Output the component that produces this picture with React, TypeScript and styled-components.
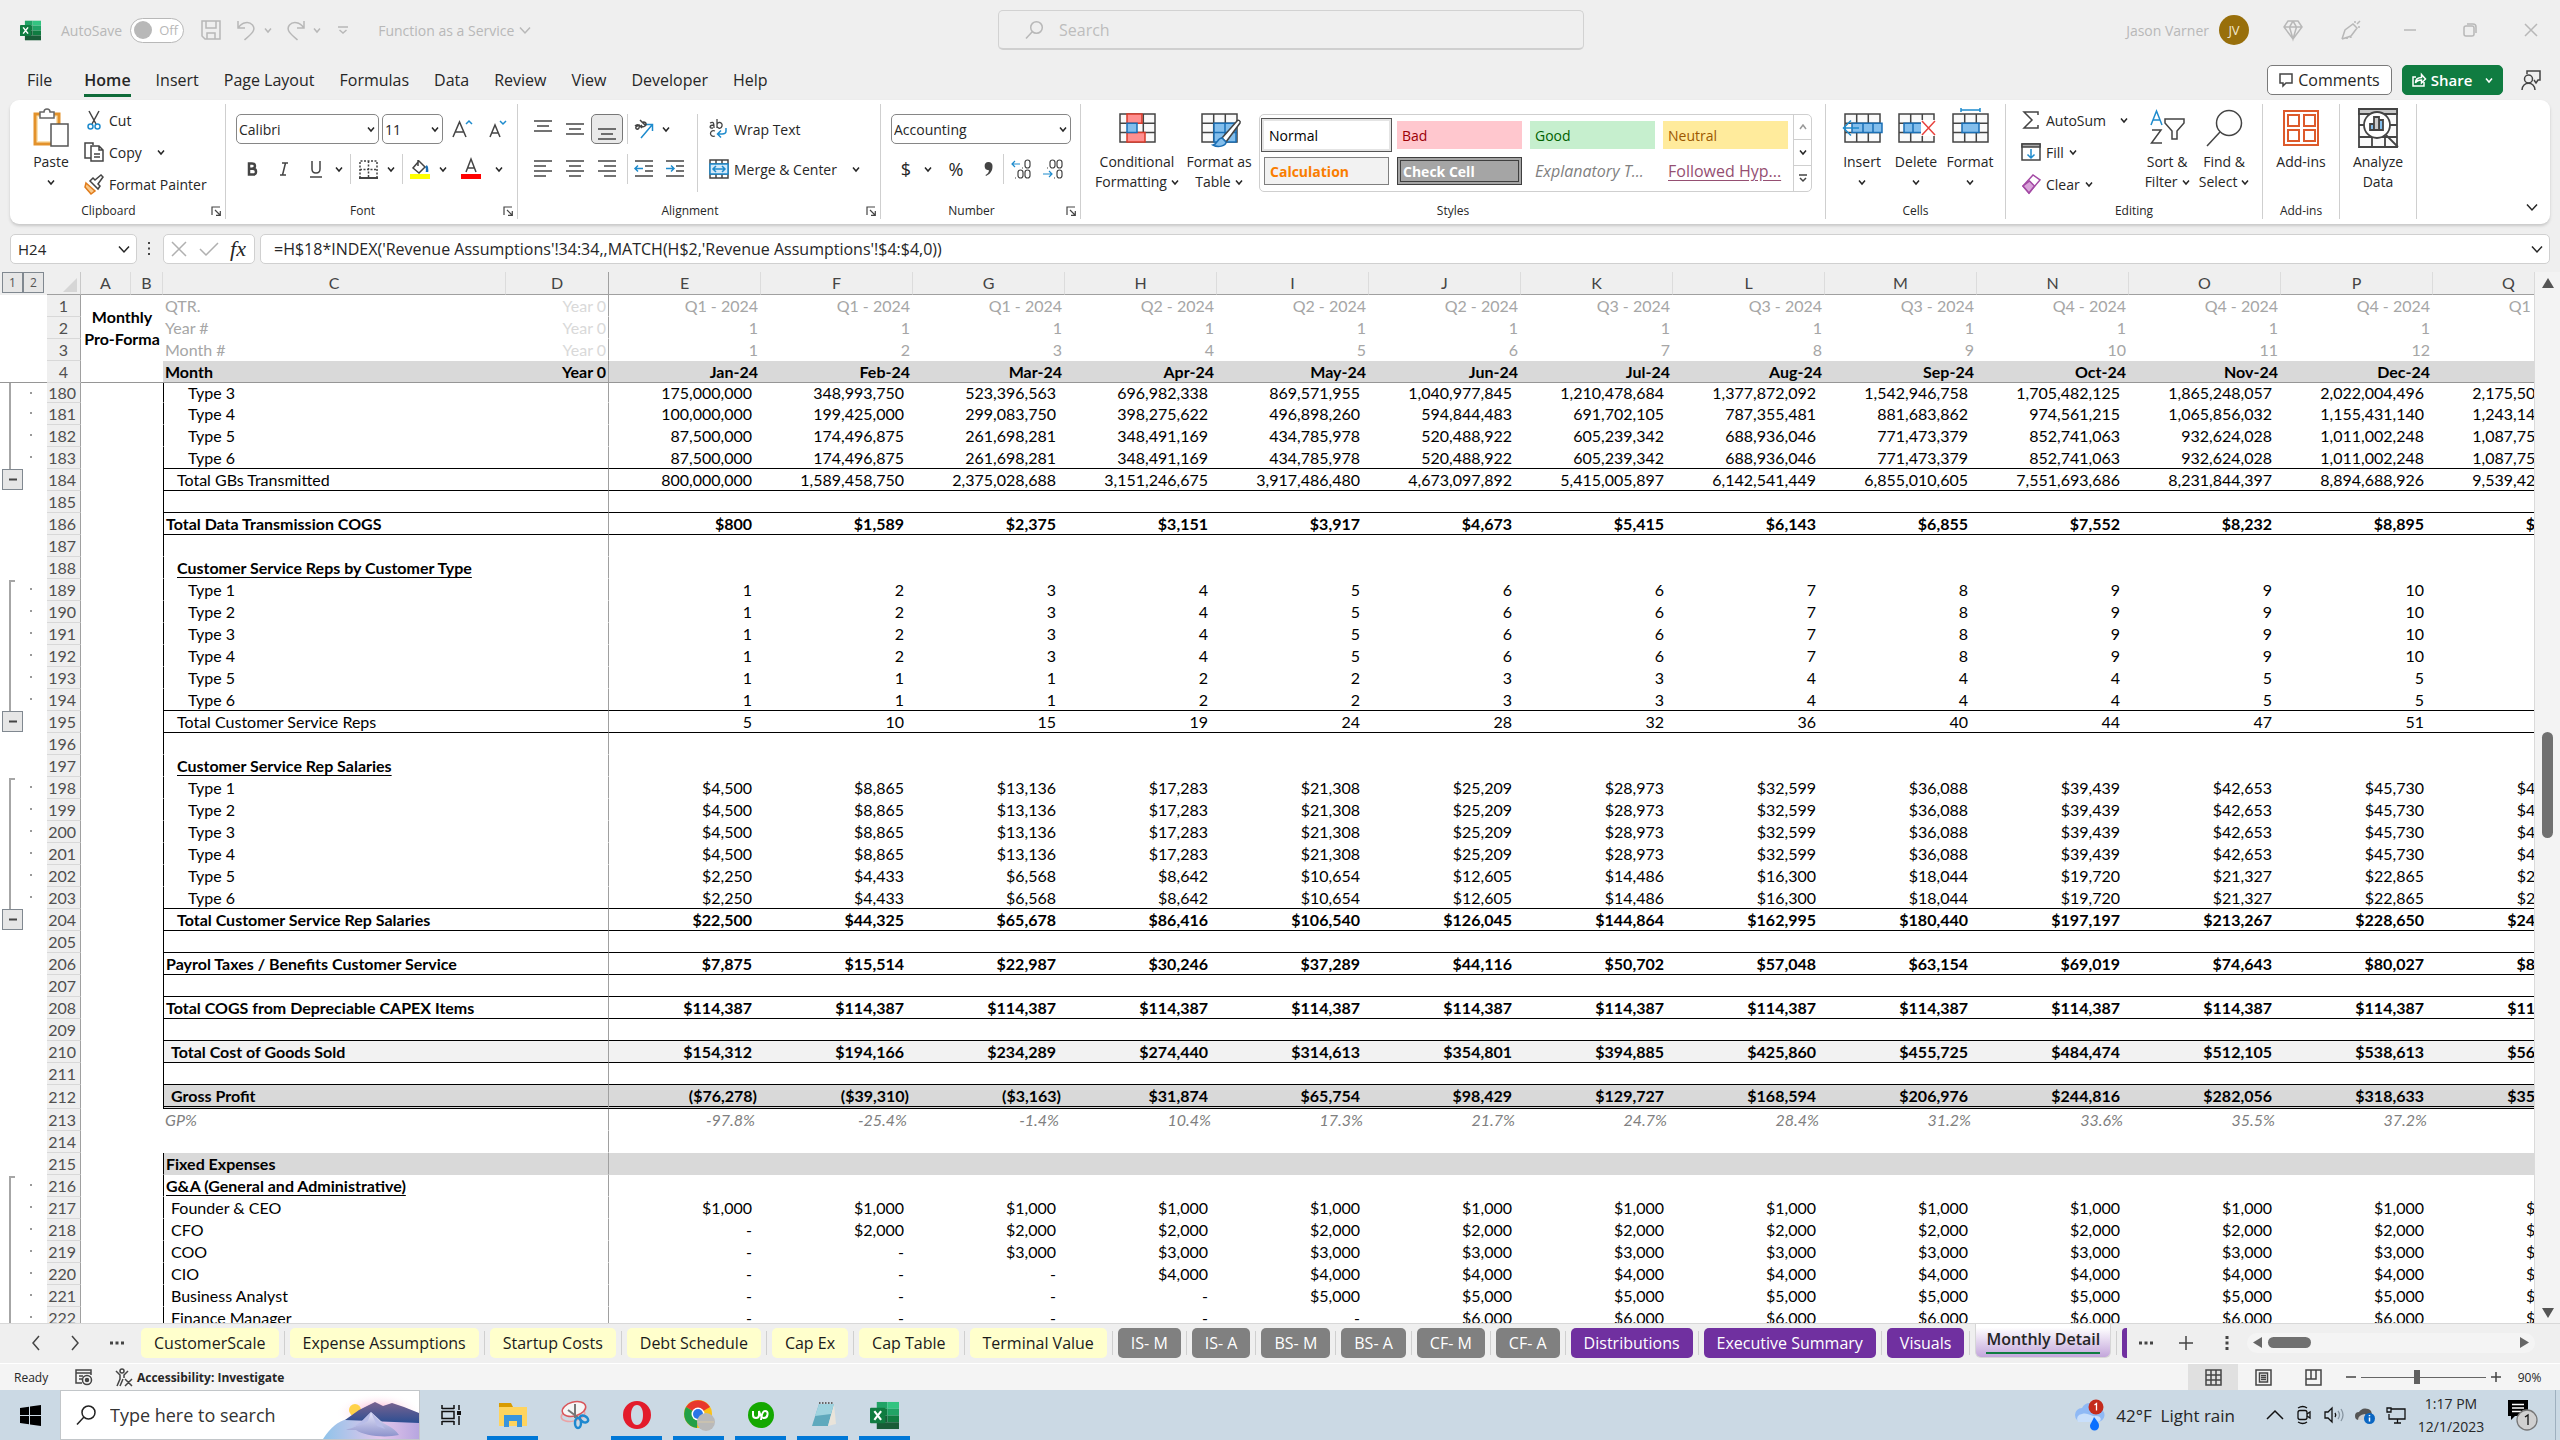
import React from 'react';
import styled, { createGlobalStyle, css } from 'styled-components';

const UI = '"Open Sans", "Noto Sans", sans-serif';
const SHEET = 'Lato, "Open Sans", sans-serif';
const INK = '#262626';
const LINE = '#444444';
const BLUE = '#1e8bcd';
const FAINT = '#b8b8b8';
const GREEN = '#107c41';

const Global = createGlobalStyle`
  * { box-sizing: border-box; }
  html, body { margin: 0; background: #efefef; }
  body { font-family: ${UI}; font-size: 14px; color: ${INK}; }
  button, input, select { font: inherit; color: inherit; margin: 0; }
  button { background: none; border: 0; padding: 0; }
`;

/* ---------- shared pieces ---------- */

const Svg = styled.svg`
  display: block;
  flex: none;
  overflow: visible;
`;

type IconProps = { w: number; h?: number; c?: string; s?: number; children: React.ReactNode };
const Icon = ({ w, h = w, c = LINE, s = 1.5, children }: IconProps) => (
  <Svg width={w} height={h} viewBox={`0 0 ${w} ${h}`} fill="none" stroke={c} strokeWidth={s} aria-hidden="true">
    {children}
  </Svg>
);
const Chevron = ({ w = 8, c = INK, s = 1.5 }: { w?: number; c?: string; s?: number }) => (
  <Icon w={w} h={w / 2 + 1} c={c} s={s}><path d={`M1 .5 L${w / 2} ${w / 2} L${w - 1} .5`} /></Icon>
);

const Window = styled.div`
  height: 100vh;
  display: flex;
  flex-direction: column;
  background: #efefef;
  overflow: hidden;
`;

/* ---------- title bar ---------- */

const TitleBar = styled.header`
  display: grid;
  grid-template-columns: 998px minmax(200px, 586px) 1fr;
  height: 60px;
  flex: none;
  color: ${FAINT};
`;
const TitleSide = styled.div<{ $end?: boolean }>`
  display: flex;
  align-items: center;
  height: 60px;
  padding: ${p => (p.$end ? '0 22px 0 0' : '0 0 0 20px')};
  justify-content: ${p => (p.$end ? 'flex-end' : 'flex-start')};
`;
const AutoSave = styled.label`
  display: flex;
  align-items: center;
  gap: 8px;
  margin: 0 16px 0 20px;
`;
const Toggle = styled.span`
  display: flex;
  align-items: center;
  gap: 7px;
  width: 54px;
  height: 25px;
  padding-left: 3px;
  border: 1px solid ${FAINT};
  border-radius: 13px;
  background: #fff;
  font-size: 13px;
  input {
    appearance: none;
    width: 18px;
    height: 18px;
    border-radius: 50%;
    background: ${FAINT};
  }
`;
const PlainButton = styled.button<{ $w: number; $ml?: number }>`
  display: flex;
  align-items: center;
  justify-content: center;
  gap: 5px;
  min-width: ${p => p.$w}px;
  height: 30px;
  flex: none;
  margin-left: ${p => p.$ml ?? 0}px;
`;
const SearchBox = styled.label`
  display: flex;
  align-items: center;
  gap: 16px;
  height: 40px;
  margin-top: 10px;
  padding-left: 26px;
  border: 1px solid #d2d2d2;
  border-bottom: 2px solid #cfcfcf;
  border-radius: 5px;
  input {
    flex: 1;
    border: 0;
    padding: 0;
    background: none;
    font-size: 16px;
    outline: 0;
  }
  input::placeholder { color: #bdbdbd; opacity: 1; }
`;
const Avatar = styled.span`
  display: grid;
  place-items: center;
  width: 30px;
  height: 30px;
  margin: 0 24px 0 10px;
  border-radius: 50%;
  background: #986f0b;
  color: #f3e9d0;
  font-size: 13px;
`;

/* ---------- ribbon tabs ---------- */

const TabRow = styled.nav`
  display: flex;
  align-items: center;
  height: 40px;
  flex: none;
  padding: 0 19px 0 27px;
  gap: 25px;
`;
const RibbonTab = styled.button<{ $on?: boolean }>`
  height: 34px;
  padding-top: 3px;
  font-size: 16px;
  font-weight: ${p => (p.$on ? 600 : 400)};
  border-bottom: 3px solid ${p => (p.$on ? '#0f6b39' : 'transparent')};
  &:first-child { margin-right: 7px; }
`;
const Grow = styled.div`flex: 1;`;
const Actions = styled.div`
  display: flex;
  align-items: center;
  gap: 10px;
`;
const CommentsButton = styled.button`
  display: flex;
  align-items: center;
  justify-content: center;
  gap: 5px;
  width: 125px;
  height: 30px;
  border: 1px solid #7a7a7a;
  border-radius: 5px;
  background: #fff;
  font-size: 16px;
`;
const ShareButton = styled(CommentsButton)`
  width: 101px;
  border-color: ${GREEN};
  background: ${GREEN};
  color: #fff;
  font-weight: 600;
  font-size: 15px;
  svg:last-child { margin-left: 8px; }
`;

/* ---------- ribbon ---------- */

const Ribbon = styled.section`
  display: flex;
  height: 124px;
  flex: none;
  margin: 0 10px 10px;
  padding: 4px 0 5px;
  background: #fff;
  border-radius: 9px;
  box-shadow: 0 2px 3px #c8c8c8;
`;
const GroupBox = styled.div<{ $w: number }>`
  display: flex;
  flex-direction: column;
  width: ${p => p.$w}px;
  flex: none;
  border-right: 1px solid #cfcfcf;
`;
const GroupBody = styled.div<{ $pl?: number }>`
  display: flex;
  flex: 1;
  padding-left: ${p => p.$pl ?? 0}px;
`;
const GroupFoot = styled.div`
  display: flex;
  align-items: center;
  height: 16px;
  font-size: 12px;
  line-height: 16px;
  span { flex: 1; text-align: center; }
  button { width: 18px; padding-left: 4px; }
`;
const Stack = styled.div<{ $pt?: number; $gap?: number; $ml?: number }>`
  display: flex;
  flex-direction: column;
  padding-top: ${p => p.$pt ?? 10}px;
  gap: ${p => p.$gap ?? 10}px;
  margin-left: ${p => p.$ml ?? 0}px;
`;
const Line = styled.div<{ $gap?: number }>`
  display: flex;
  align-items: center;
  height: 30px;
  gap: ${p => p.$gap ?? 0}px;
`;
const Tool = styled.button<{ $on?: boolean; $w?: number }>`
  display: flex;
  align-items: center;
  justify-content: center;
  width: ${p => p.$w ?? 32}px;
  height: 30px;
  flex: none;
  font-size: 18px;
  ${p => p.$on && css`border: 1px solid #777; border-radius: 5px; background: #e9e9e9;`}
`;
const Drop = styled(Tool)`width: 14px;`;
const Sep = styled.i<{ $h?: number }>`
  width: 1px;
  height: ${p => p.$h ?? 30}px;
  flex: none;
  margin: 0 1px 0 4px;
  background: #cfcfcf;
`;
const TextTool = styled.button<{ $h?: number }>`
  display: flex;
  align-items: center;
  gap: 5px;
  height: ${p => p.$h ?? 32}px;
  white-space: nowrap;
`;
const IconSlot = styled.span<{ $w: number }>`
  display: flex;
  justify-content: center;
  width: ${p => p.$w}px;
  flex: none;
`;
const BigTool = styled.button<{ $w: number }>`
  display: flex;
  flex-direction: column;
  align-items: center;
  width: ${p => p.$w}px;
  flex: none;
  height: 88px;
  line-height: 20px;
  white-space: nowrap;
`;
const BigArt = styled.span`
  display: flex;
  align-items: center;
  justify-content: center;
  height: 48px;
`;
const BigLine = styled.span`
  display: flex;
  align-items: center;
  gap: 4px;
  height: 20px;
`;
const SelectWrap = styled.span<{ $w: number }>`
  display: grid;
  align-items: center;
  width: ${p => p.$w}px;
  height: 30px;
  flex: none;
  select {
    grid-area: 1 / 1;
    width: 100%;
    height: 30px;
    padding: 0 2px;
    appearance: none;
    border: 1px solid #868686;
    border-radius: 5px;
    background: #fff;
  }
  svg { grid-area: 1 / 1; justify-self: end; margin-right: 4px; pointer-events: none; }
`;
const Gallery = styled.div`
  display: flex;
  width: 553px;
  height: 78px;
  margin: 10px 0 0 4px;
  border: 1px solid #cfcfcf;
  border-radius: 5px;
  overflow: hidden;
`;
const Swatches = styled.div`
  display: grid;
  grid-template-columns: repeat(4, 125px);
  grid-auto-rows: 28px;
  gap: 8px;
  padding: 6px 5px 0 4px;
`;
const Swatch = styled.button<{ $bg: string; $fg: string; $kind?: string }>`
  padding-left: 5px;
  text-align: left;
  background: ${p => p.$bg};
  color: ${p => p.$fg};
  white-space: nowrap;
  ${p => p.$kind === 'picked' && css`outline: 1px solid #555; outline-offset: 2px; box-shadow: 0 0 0 2px #e4e4e4;`}
  ${p => p.$kind === 'calc' && css`border: 1px solid #7f7f7f; font-weight: 700;`}
  ${p => p.$kind === 'check' && css`border: 4px double #3f3f3f; padding-left: 2px; font-weight: 700;`}
  ${p => p.$kind === 'note' && css`font-style: italic; font-size: 16px;`}
  ${p => p.$kind === 'link' && css`text-decoration: underline; text-underline-offset: 3px; font-size: 16px;`}
`;
const GalleryNav = styled.div`
  display: grid;
  grid-template-rows: 1fr 1fr 1fr;
  flex: 1;
  border-left: 1px solid #cfcfcf;
  button { display: grid; place-items: center; border-bottom: 1px solid #cfcfcf; }
  button:last-child { border: 0; }
`;
const Collapse = styled.button`
  align-self: flex-end;
  margin: 0 12px 8px auto;
`;

/* ---------- formula bar ---------- */

const FormulaBar = styled.section`
  display: flex;
  align-items: center;
  height: 38px;
  flex: none;
  padding: 0 10px 8px;
  gap: 5px;
`;
const NameBox = styled.label`
  display: flex;
  align-items: center;
  width: 127px;
  height: 30px;
  padding: 0 6px 0 7px;
  border: 1px solid #d0d0d0;
  border-radius: 5px;
  background: #fff;
  input { width: 100px; flex: 1; border: 0; padding: 0; background: none; font-size: 15px; outline: 0; }
`;
const FxBox = styled.div`
  display: flex;
  align-items: center;
  justify-content: space-between;
  width: 92px;
  height: 30px;
  margin-left: 2px;
  padding: 0 8px 0 7px;
  border: 1px solid #d0d0d0;
  border-radius: 5px;
  background: #fff;
`;
const Fx = styled.button`
  font: italic 22px/24px "Liberation Serif", serif;
`;
const FormulaField = styled(NameBox)`
  flex: 1;
  padding-left: 13px;
  input { font-size: 16px; }
`;

/* ---------- worksheet ---------- */

const SheetArea = styled.main`
  display: flex;
  flex: 1;
  min-height: 0;
  background: #fff;
`;
const GridClip = styled.div`
  flex: 1;
  min-width: 0;
  overflow: hidden;
`;
const Grid = styled.table`
  width: 2585px;
  table-layout: fixed;
  border-collapse: separate;
  border-spacing: 0;
  background: #fff;
  font-family: ${SHEET};
  font-size: 16px;
  line-height: 21px;
  color: #000;
  white-space: nowrap;
  th, td { padding: 0; overflow: hidden; }
`;
const Col = styled.col<{ $w: number }>`width: ${p => p.$w}px;`;
const HeadRow = styled.tr`
  height: 23px;
  background: #efefef;
`;
const ColHead = styled.th<{ $freeze?: boolean }>`
  height: 23px;
  border-bottom: 1px solid #a0a0a0;
  border-right: 1px solid ${p => (p.$freeze ? '#a0a0a0' : '#dcdcdc')};
  color: #444;
  font-weight: 400;
  line-height: 22px;
`;
const LevelCell = styled.th`
  && { padding-left: 2px; text-align: left; vertical-align: top; line-height: 0; }
`;
const Level = styled.button`
  width: 21px;
  height: 21px;
  border: 1px solid #808890;
  background: #e6e6e6;
  font: 12px/18px ${UI};
  color: #555;
`;
const Corner = styled(ColHead)`
  border-right: 1px solid #c8c8c8;
  svg { margin: 4px 3px 0 auto; }
`;
const Row = styled.tr<{ $h?: number }>`
  height: ${p => p.$h ?? 22}px;
  ${p => p.$h === 20 && css`line-height: 19px;`}
`;
const RowHead = styled.th`
  && { padding-right: 4px; }
  border-right: 1px solid #a0a0a0;
  border-bottom: 1px solid #d8d8d8;
  background: #efefef;
  color: #505050;
  font-weight: 400;
  text-align: right;
`;
const FrozenHead = styled(RowHead)`
  &&& { padding-right: 0; }
  text-align: center;
`;
const GutterCell = styled.td`
  position: relative;
  vertical-align: top;
`;
const Bracket = styled.i<{ $start?: boolean }>`
  position: absolute;
  inset: ${p => (p.$start ? '1px' : '0')} auto 0 9px;
  width: 6px;
  border-left: 2px solid #a6a6a6;
  border-top: ${p => (p.$start ? '2px solid #a6a6a6' : '0')};
`;
const Dot = styled.i`
  position: absolute;
  left: 30px;
  top: 9px;
  width: 2px;
  height: 2px;
  background: #999;
`;
const Minus = styled.button`
  display: grid;
  place-items: center;
  width: 21px;
  height: 21px;
  margin-left: 2px;
  border: 1px solid #808890;
  background: #e6e6e6;
`;
type CellStyle = {
  $bg?: string; $fg?: string; $bold?: boolean; $italic?: boolean; $under?: boolean;
  $line?: string; $right?: number; $left?: number; $edge?: string; $divide?: boolean;
};
const Cell = styled.td<CellStyle>`
  background: ${p => p.$bg ?? 'transparent'};
  color: ${p => p.$fg ?? '#000'};
  font-weight: ${p => (p.$bold ? 700 : 400)};
  font-style: ${p => (p.$italic ? 'italic' : 'normal')};
  text-decoration: ${p => (p.$under ? 'underline' : 'none')};
  text-underline-offset: 3px;
  text-decoration-skip-ink: none;
  border-bottom: ${p => p.$line ?? '1px solid transparent'};
  text-align: ${p => (p.$left === undefined ? 'right' : 'left')};
  && { padding-left: ${p => p.$left ?? 0}px; padding-right: ${p => p.$right ?? 0}px; }
  ${p => p.$edge && css`border-left: 1px solid ${p.$edge};`}
  ${p => p.$divide && css`border-right: 1px solid #a0a0a0;`}
`;
const Title = styled.td`
  text-align: center;
  font-weight: 700;
  line-height: 22px;
`;
const VScroll = styled.aside`
  display: flex;
  flex-direction: column;
  align-items: center;
  width: 26px;
  padding: 6px 0 5px;
  border-left: 1px solid #dadada;
  background: #f3f3f3;
`;
const VThumb = styled.div`
  width: 11px;
  height: 106px;
  margin-top: 444px;
  border-radius: 6px;
  background: #707070;
`;

/* ---------- sheet tabs & status ---------- */

const SheetBar = styled.nav`
  display: flex;
  align-items: center;
  height: 41px;
  flex: none;
  padding: 0 25px 2px 32px;
  border-top: 1px solid #d8d8d8;
  border-bottom: 1px solid #fff;
  white-space: nowrap;
`;
const NavSet = styled.div`
  display: flex;
  align-items: center;
  gap: 31px;
  width: 109px;
  flex: none;
`;
const TabSlot = styled.div`
  display: flex;
  align-items: center;
  flex: none;
  &::after { content: ''; width: 1px; height: 24px; margin: 0 5px; background: #cfcfcf; }
`;
const SheetTab = styled.button<{ $bg: string; $fg: string }>`
  height: 30px;
  padding: 0 13px;
  border-radius: 5px;
  background: ${p => p.$bg};
  color: ${p => p.$fg};
  font-size: 16px;
`;
const ActiveTab = styled.button`
  height: 34px;
  margin-top: -4px;
  padding: 0 10px;
  border: 1px solid #d6d6d6;
  border-top: 0;
  border-radius: 0 0 6px 6px;
  background: linear-gradient(#fff 10%, #c3a6db);
  font-size: 16px;
  font-weight: 600;
  span { display: block; height: 27px; line-height: 25px; border-bottom: 2px solid ${GREEN}; }
`;
const NextTab = styled.span`
  width: 5px;
  height: 30px;
  border-radius: 4px 0 0 4px;
  background: #7030a0;
`;
const HScroll = styled.div`
  display: flex;
  align-items: center;
  width: 288px;
  height: 20px;
  margin-left: 18px;
  padding: 0 6px;
  border-radius: 10px;
  background: #f4f4f4;
`;
const HThumb = styled.div`
  width: 43px;
  height: 11px;
  margin: 0 auto 0 6px;
  border-radius: 6px;
  background: #707070;
`;
const StatusBar = styled.footer`
  display: flex;
  align-items: center;
  height: 26px;
  flex: none;
  padding: 0 18px 0 14px;
  background: #f4f4f4;
  font-size: 12px;
`;
const ViewButton = styled.button<{ $on?: boolean }>`
  display: grid;
  place-items: center;
  width: 50px;
  height: 26px;
  background: ${p => (p.$on ? '#e0e0e0' : 'transparent')};
`;
const Zoom = styled.input`
  && { margin: 0 5px; }
  width: 125px;
  height: 16px;
  appearance: none;
  background: linear-gradient(#666, #666) center / 100% 1px no-repeat;
  &::-webkit-slider-thumb {
    appearance: none;
    width: 6px;
    height: 14px;
    background: #606060;
  }
`;

/* ---------- taskbar ---------- */

const Taskbar = styled.footer`
  display: flex;
  height: 50px;
  flex: none;
  background: #cbd9e4;
`;
const StartButton = styled.button`
  width: 60px;
  padding-left: 20px;
`;
const TaskSearch = styled.label`
  display: flex;
  align-items: center;
  width: 360px;
  margin-right: -6px;
  padding-left: 15px;
  border: 1px solid #c2c6c9;
  background: #fff;
  overflow: hidden;
  input { width: 200px; flex: 1; border: 0; padding: 0 0 0 14px; background: none; font-size: 18px; outline: 0; }
  input::placeholder { color: #333; opacity: 1; }
`;
const TaskApp = styled.button<{ $open?: boolean }>`
  display: grid;
  place-items: center;
  width: 51px;
  height: 50px;
  margin-left: 11px;
  padding-top: 4px;
  border-bottom: 4px solid ${p => (p.$open ? '#0078d7' : 'transparent')};
`;
const Tray = styled.div`
  display: flex;
  align-items: center;
  margin-left: auto;
  padding-right: 17px;
  border-right: 1px solid #9fb0bf;
  margin-right: 4px;
`;
const Weather = styled.button`
  display: flex;
  align-items: center;
  gap: 12px;
  font-size: 17px;
  white-space: pre;
`;
const TrayIcons = styled.div`
  display: flex;
  align-items: center;
  gap: 11px;
  margin: 0 10px 0 31px;
`;
const Clock = styled.time`
  width: 70px;
  margin-right: 22px;
  font-size: 14px;
  line-height: 23px;
  text-align: center;
  white-space: nowrap;
`;

/* ---------- drawings ---------- */

const ExcelLogo = ({ w = 21 }: { w?: number }) => (
  <Svg width={w} height={w} viewBox="0 0 30 30" aria-hidden="true">
    <path d="M7 1h11v7H7z" fill="#21a366" /><path d="M18 1h12v7H18z" fill="#33c481" />
    <path d="M7 8h11v7H7z" fill="#107c41" /><path d="M18 8h12v7H18z" fill="#21a366" />
    <path d="M7 15h11v7H7z" fill="#185c37" /><path d="M18 15h12v7H18z" fill="#107c41" />
    <path d="M7 22h23v7H7z" fill="#185c37" />
    <rect x="0" y="7" width="16" height="16" rx="1" fill="#107c41" />
    <path d="M4.500 10.500l7 9M11.500 10.500l-7 9" stroke="#fff" strokeWidth="2.200" />
  </Svg>
);
const Launcher = () => <Icon w={10} s={1.2}><path d="M1 9V1h8M4 4l5 5M9.300 5v4.300H5" /></Icon>;
const ALIGN: Record<string, number[][]> = {
  top: [[0, 18, 1], [3, 15, 6], [0, 18, 11]],
  middle: [[0, 18, 4], [3, 15, 9], [0, 18, 14]],
  bottom: [[0, 18, 9], [3, 15, 14], [0, 18, 19]],
  left: [[0, 18, 1], [0, 12, 6], [0, 18, 11], [0, 12, 16]],
  center: [[0, 18, 1], [3, 15, 6], [0, 18, 11], [3, 15, 16]],
  right: [[0, 18, 1], [6, 18, 6], [0, 18, 11], [6, 18, 16]],
};
const AlignIcon = ({ kind }: { kind: string }) => (
  <Icon w={18}>{ALIGN[kind].map(([a, b, y]) => <path key={y} d={`M${a} ${y}H${b}`} />)}</Icon>
);
const IndentIcon = ({ out }: { out?: boolean }) => (
  <Icon w={18}>
    <path d="M0 1h18M10 6h8M10 11h8M0 16h18" />
    <path d={out ? 'M8 8.500H0M3 5.500l-3 3 3 3' : 'M0 8.500h8M5 5.500l3 3-3 3'} stroke={BLUE} />
  </Icon>
);
const TableArt = ({ children }: { children?: React.ReactNode }) => (
  <Icon w={38} h={40}>
    <rect x="2" y="6" width="35" height="28" fill="#fafafa" />
    <path d="M2 15.300h35M2 24.600h35M13.700 6v28M25.300 6v28" />
    {children}
  </Icon>
);
const ART = {
  cond: (
    <TableArt>
      <path d="M9 6h15v9.300H9zM9 24.600h18V34H9z" fill="#ff8f8f" stroke="#d83b2b" />
      <path d="M9 15.300h10v9.300H9z" fill="#83beec" stroke="#1a6fb5" />
    </TableArt>
  ),
  table: (
    <TableArt>
      <path d="M14 15.300h22V34H14z" fill="#83beec" stroke="#1a6fb5" />
      <path d="M14 24.600h22M25 15.300V34" stroke="#1a6fb5" />
      <path d="M37 13L22 30l4 4 14-19c1-2-2-4-3-2z" fill="#fff" />
      <path d="M22 30c-5 0-4 6-9 7 5 3 13 1 13-3z" fill="#83beec" stroke="#1a6fb5" />
    </TableArt>
  ),
  insert: <TableArt><path d="M9 15.300h30v9.300H9zM20 15.300v9.300M30 15.300v9.300" fill="#83beec" stroke="#1a6fb5" /><path d="M16 20H1M8 12.500L.5 20 8 27.500" stroke={BLUE} /></TableArt>,
  del: <TableArt><path d="M7 15.300h18v9.300H7zM16 15.300v9.300" fill="#83beec" stroke="#1a6fb5" /><path d="M24 12h16v16H24z" fill="#fff" stroke="none" /><path d="M25 13l13 14M38 13L25 27" stroke="#e8413c" /></TableArt>,
  format: <TableArt><path d="M11 15.300h17v9.300H11z" fill="#83beec" stroke="#1a6fb5" /><path d="M10 2h19M10 0v4M29 0v4" stroke={BLUE} /></TableArt>,
  paste: (
    <Icon w={36} h={38}>
      <path d="M2 5h24v30H2z" fill="#fbe3b4" stroke="#e3922b" strokeWidth="3" /><path d="M5 8h18v24H5z" fill="#fff" stroke="none" />
      <path d="M7 3h4c0-4 6-4 6 0h4v6H7z" fill="#fff" stroke="#666" /><path d="M18 15h17v22H18z" fill="#fff" stroke="#555" />
    </Icon>
  ),
  sort: (
    <Icon w={36} h={36}>
      <path d="M2 15L7.500 1 13 15M4 10h7" stroke={BLUE} /><path d="M3 20h9L2.500 33H13" /><path d="M16 9h19v4l-7 8v8h-5v-8l-7-8z" />
    </Icon>
  ),
  find: <Icon w={38} h={38}><circle cx="24" cy="14" r="12.500" /><path d="M15 23L2 37" /></Icon>,
  addins: <Icon w={36} c="#dd5a2b" s={2}><path d="M1 1h34v34H1z" /><path d="M5 5h11v11H5zM21 5h11v11H21zM5 20h11v11H5zM21 20h11v11H21z" /></Icon>,
  analyze: (
    <Icon w={40} s={1.800}>
      <path d="M1 1h38v38H1z" fill="#fafafa" /><path d="M1 1h38v5H1z" fill="#c8c8c8" /><path d="M1 17h38M1 29h38M14 29v10M27 29v10" />
      <circle cx="19" cy="17" r="13" fill="#fff" /><path d="M12 16h4v6h-4zM21 12h4v10h-4z" fill="#83beec" /><path d="M16 9h5v13h-5z" fill="#ccc" /><path d="M28 27l12 12" />
    </Icon>
  ),
};

/* ---------- data ---------- */

const LETTERS = 'EFGHIJKLMNOPQ'.split('');
const MONTHS = ['Jan-24', 'Feb-24', 'Mar-24', 'Apr-24', 'May-24', 'Jun-24', 'Jul-24', 'Aug-24', 'Sep-24', 'Oct-24', 'Nov-24', 'Dec-24'];
const QTRS = [1, 1, 1, 2, 2, 2, 3, 3, 3, 4, 4, 4].map(q => `Q${q} - 2024`).concat('Q1 - 2025');
const w = (s: string) => s.split(' ');
const T5 = w('87,500,000 174,496,875 261,698,281 348,491,169 434,785,978 520,488,922 605,239,342 688,936,046 771,473,379 852,741,063 932,624,028 1,011,002,248 1,087,750,551');
const REPS = w('1 2 3 4 5 6 6 7 8 9 9 10');
const REPS_LOW = w('1 1 1 2 2 3 3 4 4 4 5 5');
const PAY = w('$4,500 $8,865 $13,136 $17,283 $21,308 $25,209 $28,973 $32,599 $36,088 $39,439 $42,653 $45,730 $48,672');
const PAY_LOW = w('$2,250 $4,433 $6,568 $8,642 $10,654 $12,605 $14,486 $16,300 $18,044 $19,720 $21,327 $22,865 $24,336');
const hire = (from: number, pay: string) => LETTERS.map((_, i) => (i < from ? '-' : pay));

type RowData = {
  n: number; label?: string; pad?: number; v?: string[]; bold?: boolean; under?: boolean; italic?: boolean;
  line?: string; bg?: string; fg?: string; right?: number; mark?: 'start' | 'in' | 'end'; h?: number; open?: boolean;
};
const SOLID = '1px solid #000';
const types = (from: number, first: number, sets: string[][]): RowData[] =>
  sets.map((v, i) => ({
    n: from + i, label: `Type ${first + i}`, pad: 24, v,
    mark: i === 0 && first === 1 ? 'start' : 'in', line: i === sets.length - 1 ? SOLID : undefined,
  }));

const ROWS: RowData[] = [
  ...types(180, 3, [
    w('175,000,000 348,993,750 523,396,563 696,982,338 869,571,955 1,040,977,845 1,210,478,684 1,377,872,092 1,542,946,758 1,705,482,125 1,865,248,057 2,022,004,496 2,175,501,102'),
    w('100,000,000 199,425,000 299,083,750 398,275,622 496,898,260 594,844,483 691,702,105 787,355,481 881,683,862 974,561,215 1,065,856,032 1,155,431,140 1,243,143,487'),
    T5, T5,
  ]),
  { n: 184, label: 'Total GBs Transmitted', pad: 13, line: SOLID, mark: 'end', v: w('800,000,000 1,589,458,750 2,375,028,688 3,151,246,675 3,917,486,480 4,673,097,892 5,415,005,897 6,142,541,449 6,855,010,605 7,551,693,686 8,231,844,397 8,894,688,926 9,539,421,337') },
  { n: 185, line: SOLID },
  { n: 186, label: 'Total Data Transmission COGS', bold: true, line: SOLID, v: w('$800 $1,589 $2,375 $3,151 $3,917 $4,673 $5,415 $6,143 $6,855 $7,552 $8,232 $8,895 $9,539') },
  { n: 187 },
  { n: 188, label: 'Customer Service Reps by Customer Type', pad: 13, bold: true, under: true },
  ...types(189, 1, [REPS, REPS, REPS, REPS, REPS_LOW, REPS_LOW]),
  { n: 195, label: 'Total Customer Service Reps', pad: 13, line: SOLID, mark: 'end', v: w('5 10 15 19 24 28 32 36 40 44 47 51') },
  { n: 196 },
  { n: 197, label: 'Customer Service Rep Salaries', pad: 13, bold: true, under: true },
  ...types(198, 1, [PAY, PAY, PAY, PAY, PAY_LOW, PAY_LOW]),
  { n: 204, label: 'Total Customer Service Rep Salaries', pad: 13, bold: true, line: SOLID, mark: 'end', v: w('$22,500 $44,325 $65,678 $86,416 $106,540 $126,045 $144,864 $162,995 $180,440 $197,197 $213,267 $228,650 $243,360') },
  { n: 205, line: SOLID },
  { n: 206, label: 'Payrol Taxes / Benefits Customer Service', bold: true, line: SOLID, v: w('$7,875 $15,514 $22,987 $30,246 $37,289 $44,116 $50,702 $57,048 $63,154 $69,019 $74,643 $80,027 $85,176') },
  { n: 207, line: SOLID },
  { n: 208, label: 'Total COGS from Depreciable CAPEX Items', bold: true, line: SOLID, v: LETTERS.map(() => '$114,387') },
  { n: 209, line: SOLID },
  { n: 210, label: 'Total Cost of Goods Sold', pad: 7, bold: true, line: SOLID, bg: '#f2f2f2', v: w('$154,312 $194,166 $234,289 $274,440 $314,613 $354,801 $394,885 $425,860 $455,725 $484,474 $512,105 $538,613 $564,002') },
  { n: 211, line: SOLID },
  { n: 212, label: 'Gross Profit', pad: 7, bold: true, line: '3px double #000', bg: '#d9d9d9', h: 24, v: w('($76,278) ($39,310) ($3,163) $31,874 $65,754 $98,429 $129,727 $168,594 $206,976 $244,816 $282,056 $318,633 $354,550') },
  { n: 213, label: 'GP%', italic: true, fg: '#808080', right: 6, open: true, v: w('-97.8% -25.4% -1.4% 10.4% 17.3% 21.7% 24.7% 28.4% 31.2% 33.6% 35.5% 37.2%') },
  { n: 214, open: true },
  { n: 215, label: 'Fixed Expenses', bold: true, bg: '#d9d9d9' },
  { n: 216, label: 'G&A (General and Administrative)', bold: true, under: true, mark: 'start' },
  { n: 217, label: 'Founder & CEO', pad: 7, mark: 'in', v: hire(0, '$1,000') },
  { n: 218, label: 'CFO', pad: 7, mark: 'in', v: hire(1, '$2,000') },
  { n: 219, label: 'COO', pad: 7, mark: 'in', v: hire(2, '$3,000') },
  { n: 220, label: 'CIO', pad: 7, mark: 'in', v: hire(3, '$4,000') },
  { n: 221, label: 'Business Analyst', pad: 7, mark: 'in', v: hire(4, '$5,000') },
  { n: 222, label: 'Finance Manager', pad: 7, mark: 'in', v: hire(5, '$6,000') },
];

const YELLOW = ['#ffffcc', '#1a1a1a'];
const GRAY = ['#808080', '#fff'];
const PURPLE = ['#7030a0', '#fff'];
const SHEETS: [string, string[]][] = [
  ['CustomerScale', YELLOW], ['Expense Assumptions', YELLOW], ['Startup Costs', YELLOW], ['Debt Schedule', YELLOW],
  ['Cap Ex', YELLOW], ['Cap Table', YELLOW], ['Terminal Value', YELLOW],
  ['IS- M', GRAY], ['IS- A', GRAY], ['BS- M', GRAY], ['BS- A', GRAY], ['CF- M', GRAY], ['CF- A', GRAY],
  ['Distributions', PURPLE], ['Executive Summary', PURPLE], ['Visuals', PURPLE],
];

/* ---------- sections ---------- */

const Group = ({ w: width, pl, label, launch, children }: { w: number; pl?: number; label?: string; launch?: boolean; children: React.ReactNode }) => (
  <GroupBox $w={width}>
    <GroupBody $pl={pl}>{children}</GroupBody>
    <GroupFoot><span>{label}</span>{launch && <button aria-label={`${label} settings`}><Launcher /></button>}</GroupFoot>
  </GroupBox>
);
const Big = ({ w: width, art, lines, drop }: { w: number; art: React.ReactNode; lines: string[]; drop?: boolean }) => (
  <BigTool $w={width}>
    <BigArt>{art}</BigArt>
    {lines.map((t, i) => <BigLine key={t}>{t}{drop && lines.length > 1 && i === 1 && <Chevron />}</BigLine>)}
    {lines.length === 1 && <BigLine>{drop && <Chevron />}</BigLine>}
  </BigTool>
);
const Pick = ({ w: width, value, name }: { w: number; value: string; name: string }) => (
  <SelectWrap $w={width}>
    <select aria-label={name} defaultValue={value}><option>{value}</option></select>
    <Chevron />
  </SelectWrap>
);

const TopBar = () => (
  <TitleBar>
    <TitleSide>
      <ExcelLogo />
      <AutoSave>AutoSave<Toggle><input type="checkbox" />Off</Toggle></AutoSave>
      <PlainButton $w={22} aria-label="Save"><Icon w={20} c={FAINT}><path d="M1 1h18v18H4l-3-3zM5 1v7h10V1M6 19v-6h8v6" /></Icon></PlainButton>
      <PlainButton $w={20} $ml={14} aria-label="Undo"><Icon w={19} h={20} c={FAINT}><path d="M1 1v7h7M1.500 7.500C5 2 12 1 15.500 5c4 5-1 9-8 15" /></Icon></PlainButton>
      <PlainButton $w={10} $ml={7} aria-label="Undo list"><Chevron c={FAINT} /></PlainButton>
      <PlainButton $w={20} $ml={12} aria-label="Redo"><Icon w={19} h={20} c={FAINT}><path d="M18 1v7h-7M17.500 7.500C14 2 7 1 3.500 5c-4 5 1 9 8 15" /></Icon></PlainButton>
      <PlainButton $w={10} $ml={7} aria-label="Redo list"><Chevron c={FAINT} /></PlainButton>
      <PlainButton $w={10} $ml={16} aria-label="Customize toolbar"><Icon w={10} h={8} c={FAINT}><path d="M0 1h10M1.500 4L5 7l3.500-3" /></Icon></PlainButton>
      <PlainButton $w={150} $ml={30}>Function as a Service<Chevron w={12} c={FAINT} /></PlainButton>
    </TitleSide>
    <SearchBox>
      <Icon w={18} h={18} c={FAINT}><circle cx="11.500" cy="6.500" r="5.800" /><path d="M7.500 10.500L1 17.500" /></Icon>
      <input placeholder="Search" aria-label="Search" />
    </SearchBox>
    <TitleSide $end>
      Jason Varner<Avatar>JV</Avatar>
      <PlainButton $w={40} aria-label="Premium"><Icon w={20} c={FAINT}><path d="M5 1h10l4 6-9 12L1 7zM1 7h18M10 1L6.500 7 10 19l3.500-12L10 1" /></Icon></PlainButton>
      <PlainButton $w={40} $ml={18} aria-label="Pen"><Icon w={20} c={FAINT}><path d="M1 19l3-9 8-6 4 4-6 8-9 3M6 19c0-3 4-3 4-1M14 1l0 2M19 1l-3 3M19 7h-2" /></Icon></PlainButton>
      <PlainButton $w={12} $ml={33} aria-label="Minimize"><Icon w={12} c={FAINT}><path d="M0 6h12" /></Icon></PlainButton>
      <PlainButton $w={14} $ml={47} aria-label="Restore"><Icon w={14} c={FAINT}><rect x="1" y="3" width="10" height="10" rx="2" /><path d="M4 1h6q3 0 3 3v6" /></Icon></PlainButton>
      <PlainButton $w={14} $ml={47} aria-label="Close"><Icon w={14} c={FAINT}><path d="M1 1l12 12M13 1L1 13" /></Icon></PlainButton>
    </TitleSide>
  </TitleBar>
);

const Tabs = () => (
  <TabRow>
    {['File', 'Home', 'Insert', 'Page Layout', 'Formulas', 'Data', 'Review', 'View', 'Developer', 'Help'].map(t => (
      <RibbonTab key={t} $on={t === 'Home'}>{t}</RibbonTab>
    ))}
    <Grow />
    <Actions>
      <CommentsButton><Icon w={14}><path d="M1 1h12v9H7l-3 3v-3H1z" /></Icon>Comments</CommentsButton>
      <ShareButton><Icon w={14} c="#fff"><path d="M4 4H1v9h11V9M3.500 10c0-4 3-5.500 6-5.500V1.500l4 4.500-4 4V7c-3 0-5 1-6 3z" /></Icon>Share<Chevron c="#fff" /></ShareButton>
      <PlainButton $w={20} $ml={8} aria-label="Account"><Icon w={20}><path d="M6 4V1h13v9h-2l-2 3-2-3" /><circle cx="7.500" cy="9" r="4" /><path d="M1 20c0-9 13-9 13 0" /></Icon></PlainButton>
    </Actions>
  </TabRow>
);

const RibbonPanel = () => (
  <Ribbon>
    <Group w={216} pl={20} label="Clipboard" launch>
      <Big w={42} art={ART.paste} lines={['Paste']} drop />
      <Stack $pt={0} $gap={0} $ml={12}>
        <TextTool><IconSlot $w={20}><Icon w={14} h={20}><path d="M2 1l7 13M12 1L5 14" /><circle cx="3.500" cy="16.500" r="2.500" stroke={BLUE} /><circle cx="10.500" cy="16.500" r="2.500" stroke={BLUE} /></Icon></IconSlot>Cut</TextTool>
        <TextTool><IconSlot $w={20}><Icon w={20}><path d="M7 16H1V1h8v2" /><path d="M7 4h8l4 4v11H7zM15 4v4h4M10 12h6M10 15h6" /></Icon></IconSlot>Copy<IconSlot $w={28}><Chevron /></IconSlot></TextTool>
        <TextTool><IconSlot $w={20}><Icon w={20}><path d="M2 9l9 8-4 3-6-7z" fill="#f9c98a" stroke="#e07b1a" /><path d="M6 7l8 8 2-3-2-2 5-7-2-2-6 5-2-2z" fill="#fff" /></Icon></IconSlot>Format Painter</TextTool>
      </Stack>
    </Group>
    <Group w={292} pl={10} label="Font" launch>
      <Stack>
        <Line $gap={3}>
          <Pick w={143} value="Calibri" name="Font name" /><Pick w={61} value="11" name="Font size" />
          <Tool aria-label="Increase font size"><Icon w={20}><path d="M1 18L7.500 3 14 18M3.500 13h8" /><path d="M14 5l3-3 3 3" stroke={BLUE} /></Icon></Tool>
          <Tool aria-label="Decrease font size"><Icon w={20}><path d="M3 18l5-12 5 12M5 14h6" /><path d="M13 2l3 3 3-3" stroke={BLUE} /></Icon></Tool>
        </Line>
        <Line>
          <Tool aria-label="Bold"><Icon w={10} h={14} s={2.500}><path d="M2 1.500h3q3 0 3 2.500T5 6.700H2zM2 6.700h4q3 0 3 3t-3 2.800H2z" /></Icon></Tool>
          <Tool aria-label="Italic"><Icon w={10} h={14}><path d="M3 1h6M1 13h6M6.500 1l-3 12" /></Icon></Tool>
          <Tool aria-label="Underline"><Icon w={12} h={17}><path d="M2 0v8q0 4 4 4t4-4V0M0 16h12" /></Icon></Tool>
          <Drop aria-label="Underline options"><Chevron /></Drop><Sep />
          <Tool aria-label="Borders"><Icon w={19}><path d="M1 18V1h17v17M9.500 1v17M1 9.500h17" strokeDasharray="2 1.500" /><path d="M0 18h19" strokeWidth="2" /></Icon></Tool>
          <Drop aria-label="Border options"><Chevron /></Drop><Sep />
          <Tool aria-label="Fill color"><Icon w={20}><path d="M9 2L3 9l6 5 6-6zM8 1v6" /><path d="M16 7c2 2 1 4 1 6" stroke="#1a6fb5" strokeWidth="2.500" /><path d="M0 17.500h20" stroke="#ffff00" strokeWidth="5" /></Icon></Tool>
          <Drop aria-label="Fill options"><Chevron /></Drop>
          <Tool $w={42} aria-label="Font color"><Icon w={20}><path d="M5 13L10 0l5 13M6.500 9h7" /><path d="M0 17.500h20" stroke="#ff0000" strokeWidth="5" /></Icon></Tool>
          <Drop aria-label="Font color options"><Chevron /></Drop>
        </Line>
      </Stack>
    </Group>
    <Group w={363} pl={9} label="Alignment" launch>
      <Stack>
        <Line>
          <Tool aria-label="Top align"><AlignIcon kind="top" /></Tool>
          <Tool aria-label="Middle align"><AlignIcon kind="middle" /></Tool>
          <Tool $on aria-label="Bottom align"><AlignIcon kind="bottom" /></Tool>
          <Sep /><Tool $w={30} aria-label="Orientation"><Icon w={20}><path d="M7 19L18 6M12 5.500h6.500V12" stroke={BLUE} /><path d="M1 7c3-3 5 0 4 2s-4 1-3-1l3-2 3 3M6 1l6 6M8 4c2-3 6 1 3 3s-3 0-4-1" /></Icon></Tool>
          <Drop aria-label="Orientation options"><Chevron /></Drop>
        </Line>
        <Line>
          <Tool aria-label="Align left"><AlignIcon kind="left" /></Tool>
          <Tool aria-label="Center"><AlignIcon kind="center" /></Tool>
          <Tool aria-label="Align right"><AlignIcon kind="right" /></Tool>
          <Sep /><Tool $w={30} aria-label="Decrease indent"><IndentIcon out /></Tool>
          <Tool aria-label="Increase indent"><IndentIcon /></Tool>
        </Line>
      </Stack>
      <Stack $ml={2}><Sep $h={78} /></Stack>
      <Stack $ml={10}>
        <TextTool $h={30}><IconSlot $w={20}><Icon w={20}><path d="M1 4c4-2 4 1 4 5M5 6c-5 0-5 4-1 3M8 0v9M8 6c0-4 6-3 5 1s-5 2-5 0M6 12c-6-2-6 7 0 5" strokeWidth="1.300" /><path d="M17 9v3q0 3-4 3H9M12 11.500L8.500 15l3.500 3.500" stroke={BLUE} /></Icon></IconSlot>Wrap Text</TextTool>
        <TextTool $h={30}><IconSlot $w={20}><Icon w={20}><path d="M1 1h18v18H1zM1 5h18M1 15h18M7 1v4M13 1v4M7 15v4M13 15v4" /><path d="M1 5h18v10H1z" fill="#d5e9f8" stroke={BLUE} /><path d="M4 10h12M7 7l-3 3 3 3M13 7l3 3-3 3" stroke={BLUE} /></Icon></IconSlot>Merge &amp; Center<IconSlot $w={28}><Chevron /></IconSlot></TextTool>
      </Stack>
    </Group>
    <Group w={200} pl={10} label="Number" launch>
      <Stack>
        <Line><Pick w={180} value="Accounting" name="Number format" /></Line>
        <Line>
          <Tool $w={30} aria-label="Currency">$</Tool><Drop aria-label="Currency options"><Chevron /></Drop>
          <Tool $w={42} aria-label="Percent">%</Tool>
          <Tool $w={22} aria-label="Comma"><Icon w={9} h={14} s={0}><path d="M4.500 0a4 4 0 0 1 4 4.500c0 5-3 8-6.500 9.500l-.5-1C4 11.500 5 10 5 8.200A4 4 0 0 1 4.500 0z" fill={LINE} /></Icon></Tool>
          <Sep />
          <Tool aria-label="Increase decimal"><Icon w={20} s={1.200}><path d="M9 5H1M4 2L1 5l3 3" stroke={BLUE} /><rect x="14" y="1" width="5" height="8" rx="2.500" /><rect x="7" y="11" width="5" height="8" rx="2.500" /><rect x="14" y="11" width="5" height="8" rx="2.500" /><path d="M11 9h1M4 19h1" /></Icon></Tool>
          <Tool aria-label="Decrease decimal"><Icon w={20} s={1.200}><path d="M0 15h9M6 12l3 3-3 3" stroke={BLUE} /><rect x="7" y="1" width="5" height="8" rx="2.500" /><rect x="14" y="1" width="5" height="8" rx="2.500" /><rect x="14" y="11" width="5" height="8" rx="2.500" /><path d="M4 9h1M11 19h1" /></Icon></Tool>
        </Line>
      </Stack>
    </Group>
    <Group w={745} pl={10} label="Styles">
      <Big w={92} art={ART.cond} lines={['Conditional', 'Formatting']} drop />
      <Big w={72} art={ART.table} lines={['Format as', 'Table']} drop />
      <Gallery>
        <Swatches>
          <Swatch $bg="#fff" $fg="#000" $kind="picked">Normal</Swatch>
          <Swatch $bg="#ffc7ce" $fg="#9c0006">Bad</Swatch>
          <Swatch $bg="#c6efce" $fg="#006100">Good</Swatch>
          <Swatch $bg="#ffeb9c" $fg="#9c5700">Neutral</Swatch>
          <Swatch $bg="#f2f2f2" $fg="#fa7d00" $kind="calc">Calculation</Swatch>
          <Swatch $bg="#a5a5a5" $fg="#fff" $kind="check">Check Cell</Swatch>
          <Swatch $bg="#fff" $fg="#7f7f7f" $kind="note">Explanatory T...</Swatch>
          <Swatch $bg="#fff" $fg="#954f72" $kind="link">Followed Hyp...</Swatch>
        </Swatches>
        <GalleryNav>
          <button aria-label="Scroll up"><Icon w={8} h={6} c="#999"><path d="M1 5l3-4 3 4" /></Icon></button>
          <button aria-label="Scroll down"><Chevron /></button>
          <button aria-label="More styles"><Icon w={8} h={8}><path d="M0 1h8M1 4l3 3 3-3" /></Icon></button>
        </GalleryNav>
      </Gallery>
    </Group>
    <Group w={180} pl={9} label="Cells">
      <Big w={54} art={ART.insert} lines={['Insert']} drop />
      <Big w={54} art={ART.del} lines={['Delete']} drop />
      <Big w={54} art={ART.format} lines={['Format']} drop />
    </Group>
    <Group w={257} pl={15} label="Editing">
      <Stack $pt={0} $gap={0}>
        <TextTool><IconSlot $w={20}><Icon w={16} h={18}><path d="M15 4V1H1l8 8-8 8h14v-3" /></Icon></IconSlot>AutoSum<IconSlot $w={26}><Chevron /></IconSlot></TextTool>
        <TextTool><IconSlot $w={20}><Icon w={20} h={18}><path d="M1 1h18v16H1z" /><path d="M1 1h18v3H1z" fill="#aaa" /><path d="M10 6v9M6.500 11.500L10 15l3.500-3.500" stroke={BLUE} /></Icon></IconSlot>Fill<Chevron /></TextTool>
        <TextTool><IconSlot $w={20}><Icon w={20} c="#a349a4"><path d="M2 12L12 1l7 5L8 19z" fill="#fff" /><path d="M2 12l6.500-5 5 5L8 19z" fill="#d9a3da" /></Icon></IconSlot>Clear<Chevron /></TextTool>
      </Stack>
      <Big w={60} art={ART.sort} lines={['Sort &', 'Filter']} drop />
      <Big w={54} art={ART.find} lines={['Find &', 'Select']} drop />
    </Group>
    <Group w={77} label="Add-ins"><Big w={76} art={ART.addins} lines={['Add-ins']} /></Group>
    <Group w={77}><Big w={76} art={ART.analyze} lines={['Analyze', 'Data']} /></Group>
    <Collapse aria-label="Collapse ribbon"><Chevron w={12} /></Collapse>
  </Ribbon>
);

const Formula = () => (
  <FormulaBar>
    <NameBox><input aria-label="Name box" defaultValue="H24" /><Chevron w={12} /></NameBox>
    <Icon w={14} h={14}><path d="M6 1h2M6 6.500h2M6 12h2" strokeWidth="2" /></Icon>
    <FxBox>
      <Icon w={16} c="#b0b0b0"><path d="M1 1l14 14M15 1L1 15" /></Icon>
      <Icon w={20} h={14} c="#b0b0b0"><path d="M1 7l6 6L19 1" /></Icon>
      <Fx aria-label="Insert function">fx</Fx>
    </FxBox>
    <FormulaField>
      <input aria-label="Formula" defaultValue="=H$18*INDEX('Revenue Assumptions'!34:34,,MATCH(H$2,'Revenue Assumptions'!$4:$4,0))" />
      <Chevron w={12} />
    </FormulaField>
  </FormulaBar>
);

const FROZEN = [
  { label: 'QTR.', v: QTRS }, { label: 'Year #', v: w('1 1 1 1 1 1 1 1 1 1 1 1') },
  { label: 'Month #', v: w('1 2 3 4 5 6 7 8 9 10 11 12') }, { label: 'Month', v: MONTHS },
];

const Sheet = () => (
  <GridClip>
    <Grid>
      <colgroup>
        {[47, 34, 50, 32, 343, 103, ...LETTERS.map(() => 152)].map((n, i) => <Col key={i} $w={n} />)}
      </colgroup>
      <thead>
        <HeadRow>
          <LevelCell><Level>1</Level><Level>2</Level></LevelCell>
          <Corner><Icon w={14} s={0}><path d="M14 0v14H0z" fill="#d6d6d6" /></Icon></Corner>
          {['A', 'B', 'C', 'D', ...LETTERS].map(l => <ColHead key={l} $freeze={l === 'D'}>{l}</ColHead>)}
        </HeadRow>
      </thead>
      <tbody>
        {FROZEN.map((r, i) => {
          const last = i === 3;
          const look = {
            $bg: last ? '#d9d9d9' : undefined, $bold: last, $fg: last ? '#000' : '#a6a6a6',
            $line: last ? '1px solid #969696' : undefined,
          };
          return (
            <Row key={r.label}>
              <Cell $line={look.$line} />
              <FrozenHead>{i + 1}</FrozenHead>
              {i === 0 && <Title colSpan={2} rowSpan={3}>Monthly<br />Pro-Forma</Title>}
              {last && <Cell colSpan={2} $line={look.$line} />}
              <Cell {...look} $left={2}>{r.label}</Cell>
              <Cell {...look} $right={2} $divide $fg={last ? '#000' : '#d9d9d9'}>Year 0</Cell>
              {LETTERS.map((l, j) => <Cell key={l} {...look} $right={3}>{r.v[j]}</Cell>)}
            </Row>
          );
        })}
        {ROWS.map((r, i) => {
          const look = { $bg: r.bg, $bold: r.bold, $italic: r.italic, $fg: r.fg, $line: r.line };
          return (
            <Row key={r.n} $h={i === 0 ? 20 : r.h}>
              <GutterCell>
                {r.mark === 'end' && <Minus aria-label="Collapse group"><Icon w={8} h={3} s={2}><path d="M0 1.500h8" /></Icon></Minus>}
                {(r.mark === 'start' || r.mark === 'in') && <><Bracket $start={r.mark === 'start'} /><Dot /></>}
              </GutterCell>
              <RowHead>{r.n}</RowHead>
              <Cell colSpan={2} />
              <Cell {...look} $under={r.under} $left={r.pad ?? 2} $edge={r.open ? undefined : '#000'}>{r.label}</Cell>
              <Cell {...look} $divide />
              {LETTERS.map((l, j) => {
                const t = r.v?.[j] ?? '';
                return <Cell key={l} {...look} $right={t.startsWith('(') ? 4 : r.right ?? 9}>{t}</Cell>;
              })}
            </Row>
          );
        })}
      </tbody>
    </Grid>
  </GridClip>
);

const BottomTabs = () => (
  <SheetBar>
    <NavSet>
      <Icon w={8} h={16}><path d="M7 1L1 8l6 7" /></Icon>
      <Icon w={8} h={16}><path d="M1 1l6 7-6 7" /></Icon>
      <Icon w={14} h={4} s={3}><path d="M0 2h3M5.500 2h3M11 2h3" /></Icon>
    </NavSet>
    {SHEETS.map(([name, [bg, fg]]) => <TabSlot key={name}><SheetTab $bg={bg} $fg={fg}>{name}</SheetTab></TabSlot>)}
    <TabSlot><ActiveTab><span>Monthly Detail</span></ActiveTab></TabSlot>
    <NextTab />
    <Grow />
    <PlainButton $w={15} aria-label="More sheets"><Icon w={14} h={4} s={3}><path d="M0 2h3M5.500 2h3M11 2h3" /></Icon></PlainButton>
    <PlainButton $w={14} $ml={26} aria-label="New sheet"><Icon w={14}><path d="M7 0v14M0 7h14" /></Icon></PlainButton>
    <PlainButton $w={4} $ml={32} aria-label="Resize"><Icon w={4} h={14} s={3}><path d="M2 0v3M2 5.500v3M2 11v3" /></Icon></PlainButton>
    <HScroll>
      <Icon w={9} h={11} s={0}><path d="M9 0v11L0 5.500z" fill="#666" /></Icon>
      <HThumb />
      <Icon w={9} h={11} s={0}><path d="M0 0v11l9-5.500z" fill="#666" /></Icon>
    </HScroll>
  </SheetBar>
);

const Status = () => (
  <StatusBar>
    Ready
    <PlainButton $w={18} $ml={27} aria-label="Record macro"><Icon w={18} h={16}><path d="M16 6V1H1v13h6M1 4h15M4 7h4M4 10h3" /><circle cx="12" cy="11" r="4.500" /><circle cx="12" cy="11" r="1.500" fill={LINE} /></Icon></PlainButton>
    <PlainButton $w={172} $ml={20}>
      <Icon w={18}><circle cx="8" cy="3" r="2" /><path d="M2 3l4 4v4l-3 7M14 3l-4 4v3M9 11l-3 7M11 11l7 7M18 11l-7 7" /></Icon>
      <b>Accessibility: Investigate</b>
    </PlainButton>
    <Grow />
    <ViewButton $on aria-label="Normal view"><Icon w={17}><path d="M1 1h15v15H1zM6 1v15M11 1v15M1 6h15M1 11h15" /></Icon></ViewButton>
    <ViewButton aria-label="Page layout view"><Icon w={17}><path d="M1 1h15v15H1zM4.500 4h8v9h-8zM6 6.500h5M6 8.500h5M6 10.500h5" /></Icon></ViewButton>
    <ViewButton aria-label="Page break view"><Icon w={17}><path d="M1 1h15v15H1zM6 1v9M11 1v9H1" /></Icon></ViewButton>
    <PlainButton $w={10} $ml={8} aria-label="Zoom out"><Icon w={10}><path d="M0 5h10" /></Icon></PlainButton>
    <Zoom type="range" min={10} max={190} defaultValue={90} aria-label="Zoom" />
    <PlainButton $w={10} aria-label="Zoom in"><Icon w={10}><path d="M0 5h10M5 0v10" /></Icon></PlainButton>
    <PlainButton $w={25} $ml={16}>90%</PlainButton>
  </StatusBar>
);

const Tasks = () => (
  <Taskbar>
    <StartButton aria-label="Start"><Icon w={21} s={0}><path d="M0 3l9-1.300V10H0zM10 1.500L21 0v10H10zM0 11h9v8.300L0 18zM10 11h11v10l-11-1.500z" fill="#000" /></Icon></StartButton>
    <TaskSearch>
      <Icon w={20} c="#222"><circle cx="12.500" cy="7.500" r="6.500" /><path d="M8 12L1 19.500" /></Icon>
      <input placeholder="Type here to search" aria-label="Type here to search" />
      <Svg width="96" height="48" viewBox="0 0 96 48" aria-hidden="true">
        <defs>
          <linearGradient id="sea" x1="0" x2="1"><stop offset="0" stopColor="#8fc3ea" /><stop offset=".6" stopColor="#e3c6ea" /><stop offset="1" stopColor="#b7a6e0" /></linearGradient>
          <linearGradient id="hill" x1="0" y1="0" x2="0" y2="1"><stop offset="0" stopColor="#7a6390" /><stop offset="1" stopColor="#2c4e92" /></linearGradient>
          <linearGradient id="ice" x1="0" y1="0" x2="0" y2="1"><stop offset="0" stopColor="#e6e6fa" /><stop offset="1" stopColor="#8d93cc" /></linearGradient>
          <radialGradient id="sky"><stop offset=".3" stopColor="#fbc4dc" /><stop offset="1" stopColor="#fff" stopOpacity="0" /></radialGradient>
        </defs>
        <ellipse cx="56" cy="22" rx="44" ry="20" fill="url(#sky)" />
        <circle cx="32" cy="19" r="6" fill="#ffd24a" />
        <path d="M0 48C8 36 14 31 24 28H96v20z" fill="url(#sea)" />
        <path d="M22 29l14-10 10-5 6-3 8 4 9-3 12 4 15 6v10z" fill="url(#hill)" />
        <path d="M23 39c4-2 10-2 15-8l10-10 10 9c5 5 12 5 18 14-14 3-35 1-43-5z" fill="url(#ice)" />
        <path d="M48 21l-3 9-7 4-8 2 8-5zM51 28l3 7 8 3-6-8-8-9z" fill="#b9bde8" />
      </Svg>
    </TaskSearch>
    <TaskApp aria-label="Task view"><Icon w={20} c="#111"><path d="M1 0v4M13 0v4M1 3.500h12M1 6.500h12v7H1zM1 16.500h12M1 16v4M13 16v4M18 0v5M18 11v9" /><path d="M18 6v4" strokeWidth="4" /></Icon></TaskApp>
    <TaskApp $open aria-label="Files"><Icon w={28} h={24} s={0}><path d="M0 0h12l2 4H0z" fill="#d99b00" /><path d="M0 4h28v19H0z" fill="#ffd45e" /><path d="M5 12h18v12h-5v-6h-8v6H5z" fill="#3a94dd" /></Icon></TaskApp>
    <TaskApp aria-label="Snip"><Icon w={28}><ellipse cx="12" cy="14" rx="12" ry="6" stroke="#eba3a5" transform="rotate(-12 12 14)" /><ellipse cx="13" cy="8" rx="12" ry="7" fill="#f6f6f6" stroke="#d9555a" transform="rotate(-15 13 8)" /><path d="M7 9l12 9M14 3l0 14" stroke="#777" strokeWidth="2" /><ellipse cx="17" cy="22" rx="3" ry="5" stroke="#1e88cf" strokeWidth="2.500" /><ellipse cx="23" cy="18" rx="4.500" ry="3" stroke="#1e88cf" strokeWidth="2.500" transform="rotate(30 23 18)" /></Icon></TaskApp>
    <TaskApp $open aria-label="Opera"><Icon w={28} s={0}><path d="M14 0a14 14 0 1 0 0 28 14 14 0 0 0 0-28zM14 4c4 0 6 4.500 6 10s-2 10-6 10-6-4.500-6-10 2-10 6-10z" fill="#e31b2b" fillRule="evenodd" /></Icon></TaskApp>
    <TaskApp $open aria-label="Chrome"><Icon w={30} s={0}><circle cx="14" cy="14" r="14" fill="#fbc116" /><path d="M14 14L2 7a14 14 0 0 1 24 0z" fill="#e8382c" /><path d="M14 14l-1 14A14 14 0 0 1 2 7z" fill="#22a048" /><circle cx="14" cy="14" r="6.500" fill="#fff" /><circle cx="14" cy="14" r="5" fill="#2a75e8" /><circle cx="22" cy="22" r="9" fill="#b9b9b9" /><path d="M14 22h16" stroke="#d8c9a8" strokeWidth="1" /></Icon></TaskApp>
    <TaskApp $open aria-label="Upwork"><Icon w={26}><circle cx="13" cy="13" r="13" fill="#14a800" stroke="none" /><path d="M5 9v4q0 3 3 3t3-3V9q2 7 5 7t3.500-3.500T17 9q-3 0-4 9" stroke="#fff" strokeWidth="2" /></Icon></TaskApp>
    <TaskApp $open aria-label="Notepad"><Icon w={28} h={26} s={0}><path d="M10 2h15l-6 22H3z" fill="#5fa9bd" /><path d="M25 2l2 20-8 2z" fill="#e9e4da" /><path d="M10 2h15l-3 10-16 2z" fill="#9fd3df" /><path d="M10 1h14" stroke="#666" strokeWidth="2" strokeDasharray="1.500 1.500" /></Icon></TaskApp>
    <TaskApp $open aria-label="Excel"><ExcelLogo w={29} /></TaskApp>
    <Tray>
      <Weather>
        <Icon w={30} s={0}><path d="M8 22a7 7 0 0 1 0-14 9 9 0 0 1 16 0 7 7 0 0 1-1 14z" fill="#8fb9f5" /><path d="M4 22a5 5 0 0 1 4-8c6-2 9 3 14 2 6 0 6 5 2 6z" fill="#c9dffb" /><path d="M20 17c5 6 5 7 5 9a4.500 4.500 0 0 1-9 0c0-2 2-4 4-9z" fill="#0a6fff" /><circle cx="22" cy="7" r="7.500" fill="#c42b1c" /><path d="M20.500 5L22.500 3.500V10.500" stroke="#fff" strokeWidth="1.300" /></Icon>
        {'42°F  Light rain'}
      </Weather>
      <TrayIcons>
        <Icon w={18} h={10} c="#111"><path d="M1 9l8-8 8 8" /></Icon>
        <Icon w={18} h={18} c="#111" s={1.300}><path d="M3 2q5-3 9 0M3 16q5 3 9 0" /><rect x="3" y="4.500" width="9" height="9" rx="2" /><path d="M12 8l3-2v6l-3-2" /></Icon>
        <Icon w={20} h={16} c="#111" s={1.300}><path d="M1 5v6h3l4 4V1L4 5zM11 6q1.500 2 0 4" /><path d="M14 4q3 4 0 8M17 2q4 6 0 12" stroke="#8795a1" /></Icon>
        <Icon w={20} h={18} s={0}><path d="M4 14a4 4 0 0 1 0-8 7 6 0 0 1 12-1l2 6-6 3z" fill="#555" /><path d="M3 14q0-5 7-6l4 6z" fill="#ccc" /><circle cx="14.500" cy="12.500" r="5.500" fill="#0a66c2" /><path d="M14.500 11.500v4M14.500 9v1.300" stroke="#fff" strokeWidth="1.500" /></Icon>
        <Icon w={20} h={17} c="#111" s={1.300}><path d="M5 2h14v10H3V7M8 16h7M11.500 12v4M1 1h4v4H1z" /></Icon>
      </TrayIcons>
      <Clock>1:17 PM<br />12/1/2023</Clock>
      <Icon w={30} h={30} s={1.300}><path d="M0 0h20v16H7l-4 4v-4H0z" fill="#000" stroke="none" /><path d="M4 4.500h12M4 8h12M4 11.500h9" stroke="#fff" /><circle cx="19" cy="20" r="10" fill="#d0d0d0" stroke="#777" /><path d="M17 17l3-2v10" stroke="#111" /></Icon>
    </Tray>
  </Taskbar>
);

export default function App() {
  return (
    <Window>
      <Global />
      <TopBar />
      <Tabs />
      <RibbonPanel />
      <Formula />
      <SheetArea>
        <Sheet />
        <VScroll>
          <Icon w={12} h={10} s={0}><path d="M6 0l6 10H0z" fill="#555" /></Icon>
          <VThumb />
          <Grow />
          <Icon w={12} h={10} s={0}><path d="M0 0h12L6 10z" fill="#555" /></Icon>
        </VScroll>
      </SheetArea>
      <BottomTabs />
      <Status />
      <Tasks />
    </Window>
  );
}
